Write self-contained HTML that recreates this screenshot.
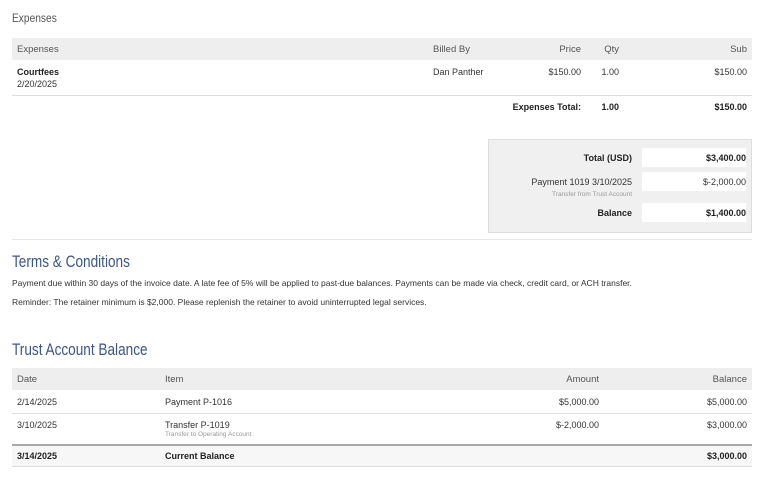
<!DOCTYPE html>
<html><head><meta charset="utf-8"><style>
*{margin:0;padding:0;box-sizing:border-box}
body{width:768px;height:481px;background:#fff;font-family:"Liberation Sans Narrow","Liberation Sans",sans-serif;color:#333;font-size:9px;position:relative;overflow:hidden}
.a{position:absolute;white-space:nowrap;line-height:1}
.r{text-align:right}
.b{font-weight:bold;color:#222}
.bar{position:absolute;left:12px;width:740px;background:#eeeeee}
.ln{position:absolute;left:12px;width:740px;height:1px;background:#ddd}
.h{color:#555;font-size:9.5px}
.t{color:#3b5687;font-size:17px;transform:scaleX(0.8);transform-origin:left top}
.s{color:#999;font-size:6.5px}
.w{position:absolute;left:642px;width:104px;height:19px;background:#fff}
</style></head><body>
<div class="a" style="left:12px;top:12px;font-size:12px;color:#555;transform:scaleX(0.85);transform-origin:left top">Expenses</div>
<div class="bar" style="top:38px;height:22px"></div>
<div class="a h" style="left:17px;top:45px">Expenses</div>
<div class="a h" style="left:433px;top:45px">Billed By</div>
<div class="a h r" style="left:481px;width:100px;top:45px">Price</div>
<div class="a h r" style="left:569px;width:50px;top:45px">Qty</div>
<div class="a h r" style="left:647px;width:100px;top:45px">Sub</div>
<div class="a b" style="left:17px;top:68px">Courtfees</div>
<div class="a" style="left:17px;top:80px">2/20/2025</div>
<div class="a" style="left:433px;top:68px">Dan Panther</div>
<div class="a r" style="left:481px;width:100px;top:68px">$150.00</div>
<div class="a r" style="left:569px;width:50px;top:68px">1.00</div>
<div class="a r" style="left:647px;width:100px;top:68px">$150.00</div>
<div class="ln" style="top:95px"></div>
<div class="a b r" style="left:481px;width:100px;top:103px">Expenses Total:</div>
<div class="a b r" style="left:569px;width:50px;top:103px">1.00</div>
<div class="a b r" style="left:647px;width:100px;top:103px">$150.00</div>

<div style="position:absolute;left:488px;top:139px;width:264px;height:94px;background:#f0f0f0;border:1px solid #ddd"></div>
<div class="w" style="top:148px"></div>
<div class="w" style="top:172px"></div>
<div class="w" style="top:203px"></div>
<div class="a b r" style="left:500px;width:132px;top:154px">Total (USD)</div>
<div class="a b r" style="left:642px;width:104px;top:154px">$3,400.00</div>
<div class="a r" style="left:500px;width:132px;top:178px">Payment 1019 3/10/2025</div>
<div class="a s r" style="left:500px;width:132px;top:192px">Transfer from Trust Account</div>
<div class="a r" style="left:642px;width:104px;top:178px">$-2,000.00</div>
<div class="a b r" style="left:500px;width:132px;top:209px">Balance</div>
<div class="a b r" style="left:642px;width:104px;top:209px">$1,400.00</div>
<div class="ln" style="top:239px;background:#e6e6e6"></div>

<div class="a t" style="left:12px;top:253px">Terms &amp; Conditions</div>
<div class="a" style="left:12px;top:279px;font-size:8.5px">Payment due within 30 days of the invoice date. A late fee of 5% will be applied to past-due balances. Payments can be made via check, credit card, or ACH transfer.</div>
<div class="a" style="left:12px;top:298px;font-size:8.5px">Reminder: The retainer minimum is $2,000. Please replenish the retainer to avoid uninterrupted legal services.</div>

<div class="a t" style="left:12px;top:341px">Trust Account Balance</div>
<div class="bar" style="top:368px;height:22px"></div>
<div class="a h" style="left:17px;top:375px">Date</div>
<div class="a h" style="left:165px;top:375px">Item</div>
<div class="a h r" style="left:499px;width:100px;top:375px">Amount</div>
<div class="a h r" style="left:647px;width:100px;top:375px">Balance</div>
<div class="a" style="left:17px;top:398px">2/14/2025</div>
<div class="a" style="left:165px;top:398px">Payment P-1016</div>
<div class="a r" style="left:499px;width:100px;top:398px">$5,000.00</div>
<div class="a r" style="left:647px;width:100px;top:398px">$5,000.00</div>
<div class="ln" style="top:413px"></div>
<div class="a" style="left:17px;top:421px">3/10/2025</div>
<div class="a" style="left:165px;top:421px">Transfer P-1019</div>
<div class="a s" style="left:165px;top:432px">Transfer to Operating Account</div>
<div class="a r" style="left:499px;width:100px;top:421px">$-2,000.00</div>
<div class="a r" style="left:647px;width:100px;top:421px">$3,000.00</div>
<div class="bar" style="top:444px;height:23px;background:#f7f7f7;border-top:2px solid #aaa;border-bottom:1px solid #ddd"></div>
<div class="a b" style="left:17px;top:452px">3/14/2025</div>
<div class="a b" style="left:165px;top:452px">Current Balance</div>
<div class="a b r" style="left:647px;width:100px;top:452px">$3,000.00</div>
</body></html>
